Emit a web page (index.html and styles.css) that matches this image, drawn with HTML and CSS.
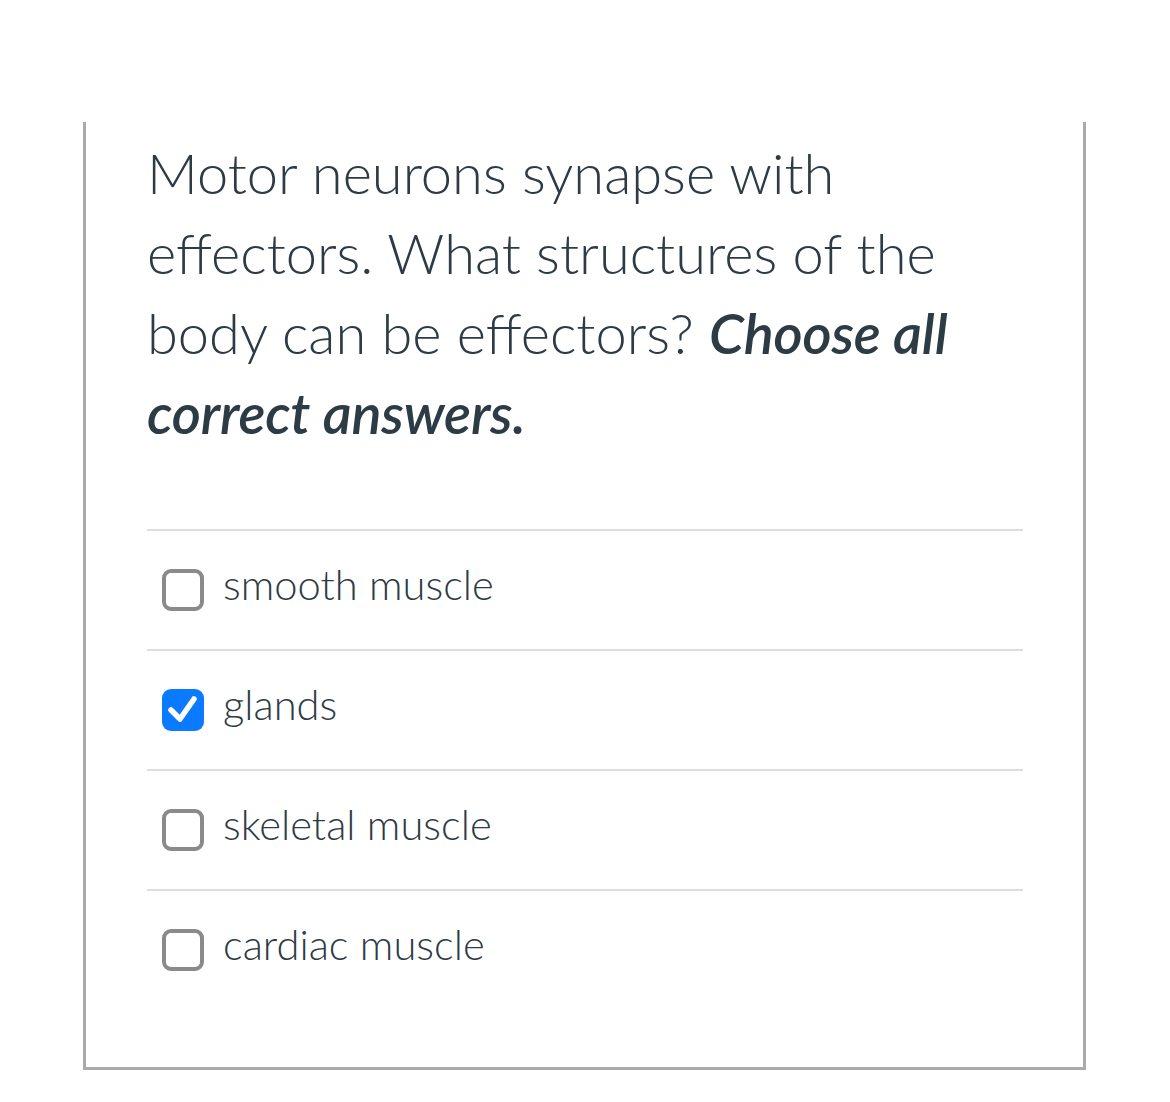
FILE: index.html
```html
<!DOCTYPE html>
<html lang="en">
<head>
    <meta charset="UTF-8">
    <meta name="viewport" content="width=device-width, initial-scale=1.0">
    <title>Question</title>
    <link rel="stylesheet" href="styles.css">
</head>
<body>
    <div class="page">
        <div class="question">
            <p class="question-text">Motor neurons synapse with effectors. What structures of the body can be effectors? <strong><em>Choose all correct answers.</em></strong></p>
            <ul class="answers">
                <li class="answer">
                    <span class="box"></span>
                    <span class="label">smooth muscle</span>
                </li>
                <li class="answer">
                    <span class="box checked">
                        <svg viewBox="0 0 42 42" width="42" height="42"><path d="M9 21 L18 30 L32 10" fill="none" stroke="#fff" stroke-width="5.5" stroke-linecap="round" stroke-linejoin="round"/></svg>
                    </span>
                    <span class="label">glands</span>
                </li>
                <li class="answer">
                    <span class="box"></span>
                    <span class="label">skeletal muscle</span>
                </li>
                <li class="answer">
                    <span class="box"></span>
                    <span class="label">cardiac muscle</span>
                </li>
            </ul>
        </div>
    </div>
</body>
</html>
```

FILE: styles.css
```css
body {
    margin: 0;
    padding: 0;
    background: #fff;
    font-family: Lato, "Noto Sans", sans-serif;
    color: #2d3b45;
}
.page {
    padding-top: 122px;
    padding-left: 83px;
}
.question {
    width: 876px;
    padding: 11px 60px 58px 61px;
    border: 3px solid #aaaaaa;
    border-top: none;
}
.question-text {
    margin: 0;
    font-size: 56px;
    font-weight: 300;
    line-height: 80px;
}
.question-text strong {
    font-weight: 600;
    letter-spacing: -0.2px;
}
.answers {
    list-style: none;
    margin: 76px 0 0 0;
    padding: 0;
}
.answer {
    display: flex;
    align-items: center;
    height: 118px;
    border-top: 2px solid #dddddd;
    padding-left: 15px;
}
.box {
    width: 34px;
    height: 34px;
    border: 4px solid #8a8a8a;
    border-radius: 9px;
    flex-shrink: 0;
}
.box.checked {
    width: 42px;
    height: 42px;
    border: none;
    background: #0a7bff;
}
.box svg {
    display: block;
}
.label {
    margin-left: 19px;
    font-size: 41.7px;
    font-weight: 300;
    margin-top: -13px;
}
```
